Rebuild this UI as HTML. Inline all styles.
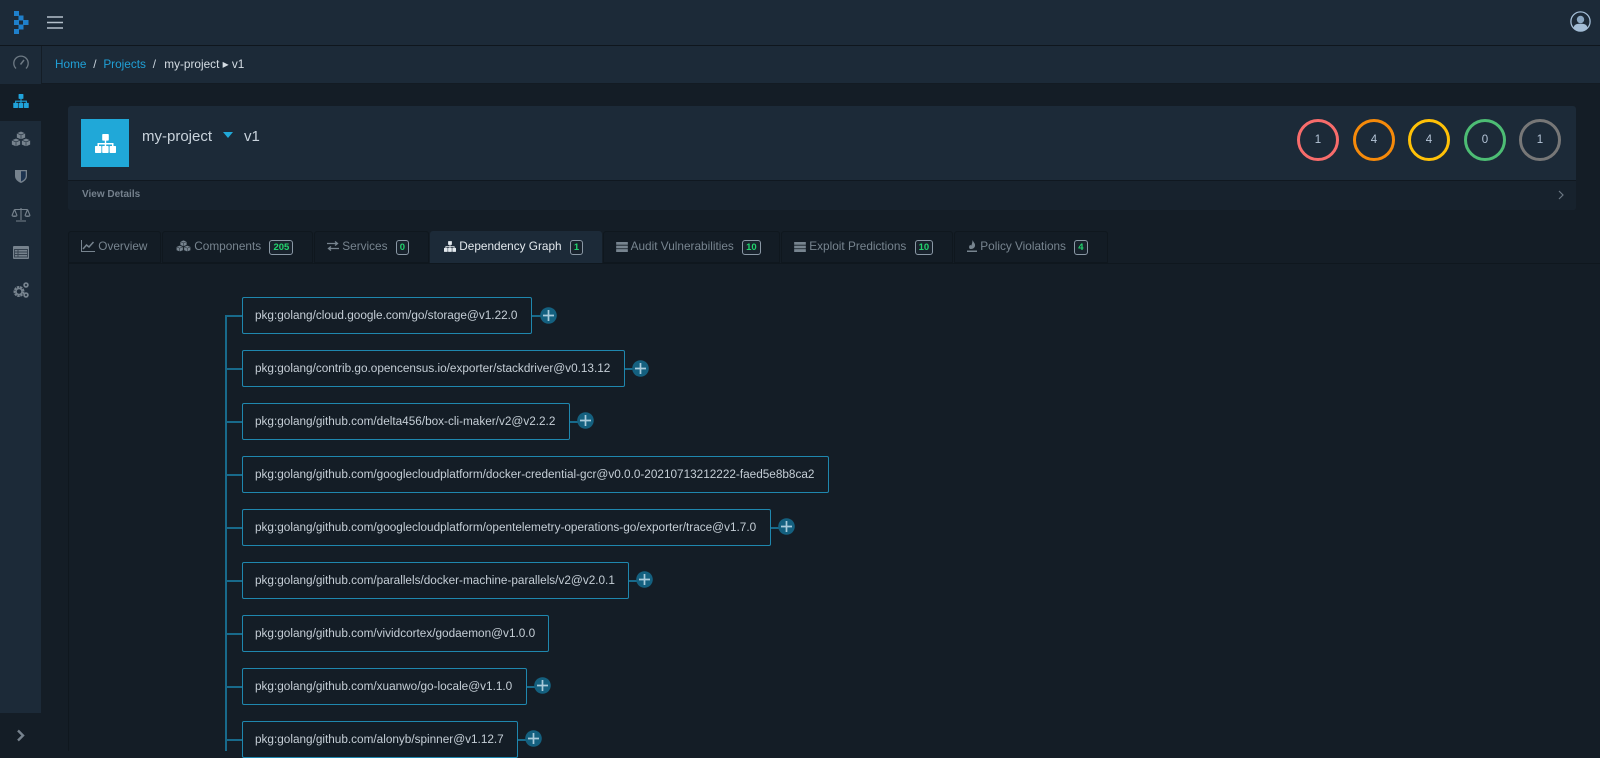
<!DOCTYPE html>
<html lang="en"><head><meta charset="utf-8"><title>my-project v1</title>
<style>
*{box-sizing:border-box}
html,body{margin:0;width:1600px;height:751px;overflow:hidden;background:#141d26;font-family:"Liberation Sans",sans-serif;font-size:11.8px;color:#c9d3dc}
.a{position:absolute}
#top{left:0;top:0;width:1600px;height:46px;background:#1c2a38;border-bottom:1px solid #0f161d}
#side{left:0;top:46px;width:41px;height:667px;background:#1c2a38}
#act{left:0;top:84px;width:41px;height:37px;background:#141d26}
#crumb{left:41px;top:46px;width:1559px;height:38px;background:#1c2a38;border-left:1px solid #141d26;border-bottom:1px solid #131b23;line-height:36px;padding-left:13px;font-size:11.8px;color:#d5dde4}
#crumb a{color:#20a0d6}
#crumb i{font-style:normal;margin:0 3.5px;color:#c9d3dc}
#card{left:68px;top:106px;width:1508px;height:104px;background:#1c2a38;border-radius:3px;overflow:hidden}
#foot{left:0;top:74px;width:1508px;height:30px;background:#17222d;border-top:1px solid #101820;color:#75818d;font-size:10px;font-weight:bold;line-height:27px;padding-left:14px}
#pic{left:13px;top:13px;width:48px;height:48px;background:#20a8d8}
.t{left:74px;top:22px;font-size:15px;color:#c9d3dc;line-height:18px}
.c{top:119px;width:42px;height:42px;border-radius:50%;border:3px solid;text-align:center;line-height:36px;font-size:11.5px;color:#b5c5d8}
.tab{--b:#141d26;top:231px;height:32px;background:#131c25;border:1px solid #0f171e;border-radius:3px 3px 0 0;color:#77848f;line-height:29px;font-size:11.8px;white-space:nowrap;padding-left:12px}
.tab svg{vertical-align:-2px}
.tab b{display:inline-block;height:15px;line-height:13px;border:1px solid #8a98a5;border-radius:3px;background:#18222c;color:#22d36e;font-size:9.5px;padding:0 3px;margin-left:5px;vertical-align:0}
#panel{left:68px;top:263px;width:1532px;height:488px;background:#141d26;border-left:1px solid #0f171e;border-top:1px solid #0f171e}
.n{left:242px;height:37px;border:1px solid #1f87ae;border-radius:2px;background:#141d26;line-height:35px;padding-left:12px;font-size:11.78px;color:#c5ced6;white-space:nowrap}
.h{left:225px;width:17px;height:2px;background:#186a8b}
.k{width:10px;height:2px;background:#186a8b}
.p{width:17px;height:17px}
</style></head><body>
<svg width="0" height="0" style="position:absolute"><defs>
<symbol id="map" viewBox="0 0 21 19"><path fill="currentColor" d="M8 0h5a.8.8 0 0 1 .8.8v5a.8.8 0 0 1-.8.8h-1.800V9h7.300v3H20.300a.7.7 0 0 1 .7.700v5.600a.7.7 0 0 1-.7.700h-5a.7.700 0 0 1-.7-.700v-5.600a.7.7 0 0 1 .7-.700h1.700v-1.500h-5.800V12h1.700a.7.7 0 0 1 .7.700v5.600a.7.7 0 0 1-.7.700h-5a.7.7 0 0 1-.7-.700v-5.600a.7.7 0 0 1 .7-.700h1.800v-1.500H4V12h1.700a.7.700 0 0 1 .7.700v5.600a.7.7 0 0 1-.7.700h-5a.7.700 0 0 1-.7-.700v-5.600A.7.700 0 0 1 .7 12h1.800V9h7.300V6.600H8a.8.8 0 0 1-.8-.8v-5A.8.8 0 0 1 8 0z"/></symbol>
<symbol id="cube" viewBox="0 0 10 9"><path fill="currentColor" stroke="var(--b,#1c2a38)" stroke-width=".7" d="M5 .2l4.500 1.800v4.800L5 8.700.5 6.800V2z"/><path fill="none" stroke="var(--b,#1c2a38)" stroke-width=".6" d="M.8 2.200L5 3.900l4.200-1.700M5 3.900v4.600"/></symbol>
<symbol id="cubes" viewBox="0 0 20 16"><use href="#cube" x="5" y="0" width="10" height="9"/><use href="#cube" x="0" y="7" width="10" height="9"/><use href="#cube" x="10" y="7" width="10" height="9"/></symbol>
<symbol id="srv" viewBox="0 0 14 12"><path fill="currentColor" d="M0 0h14v3.300H0zM0 4.300h14v3.300H0zM0 8.600h14V12H0z"/></symbol>
<symbol id="plus" viewBox="0 0 17 17"><circle cx="8.500" cy="8.500" r="8.300" fill="#14607f"/><path d="M8.500 3v11M3 8.500h11" stroke="#a9cbdb" stroke-width="1.700"/></symbol>
</defs></svg>

<div class="a" id="top"></div>
<svg class="a" style="left:14px;top:11px" width="15" height="23" viewBox="0 0 15 23"><path fill="#1f80cb" d="M0 0h5v5H0zM4.500 4.500h5v5h-5zM9 9h5.500v5H9zM0 9h5v5H0zM4.500 13.500h5v5h-5zM0 18h5v5H0z"/></svg>
<svg class="a" style="left:47px;top:15px" width="17" height="15" viewBox="0 0 17 15"><path d="M0 2h16M0 7.500h16M0 13h16" stroke="#b4c0cb" stroke-width="1.400"/></svg>
<svg class="a" style="left:1570px;top:11px" width="21" height="21" viewBox="0 0 21 21"><circle cx="10.500" cy="10.500" r="9.600" fill="#1c2a38" stroke="#a3bdd6" stroke-width="1.300"/><circle cx="10.500" cy="8.500" r="3.700" fill="#8aa7c2"/><path d="M3.500 17c.5-3.500 3-4.200 7-4.200s6.500.7 7 4.200a9.500 9.500 0 0 1-14 0z" fill="#a3bdd6"/></svg>

<div class="a" id="side"></div>
<div class="a" id="act"></div>
<svg class="a" style="left:13px;top:55px;color:#6d7983" width="16" height="15" viewBox="0 0 16 15"><path d="M3 13.500A7.200 7.200 0 1 1 13 13.500" fill="none" stroke="currentColor" stroke-width="1.300"/><path d="M7.500 9.500L11 5" stroke="currentColor" stroke-width="1.500"/></svg>
<svg class="a" style="left:13px;top:94px;color:#20a3da" width="16" height="14"><use href="#map"/></svg>
<svg class="a" style="left:11px;top:131px;color:#76828d" width="20" height="16"><use href="#cubes"/></svg>
<svg class="a" style="left:15px;top:169px" width="12" height="14" viewBox="0 0 12 14"><path fill="#76828d" d="M0 1h12v6c0 3.500-3 5.800-6 7-3-1.200-6-3.500-6-7z"/><path fill="#1c3350" d="M6 2.200h4.700V7c0 2.600-2.300 4.400-4.700 5.500z"/></svg>
<svg class="a" style="left:11px;top:207px" width="20" height="15" viewBox="0 0 20 15"><path d="M10 1v12M5 14h10M3.500 2.500h13M3.500 2.500L1 8.500M3.500 2.500L6 8.500M16.500 2.500L14 8.500M16.500 2.500L19 8.500" stroke="#76828d" stroke-width="1.100" fill="none"/><path fill="#76828d" d="M.5 8.500h6c-.3 2-5.700 2-6 0zM13.500 8.500h6c-.3 2-5.700 2-6 0z"/></svg>
<svg class="a" style="left:13px;top:246px" width="16" height="13" viewBox="0 0 16 13"><rect width="16" height="13" rx="1" fill="#76828d"/><path d="M1.500 3.500h13v7.500h-13zM1.500 6h13M1.500 8.500h13M5 3.500V11" stroke="#34414e" stroke-width=".9" fill="none"/></svg>
<svg class="a" style="left:13px;top:282px" width="16" height="16" viewBox="0 0 16 16"><circle cx="6" cy="9.500" r="4" fill="none" stroke="#76828d" stroke-width="3" stroke-dasharray="2.200 .6"/><circle cx="6" cy="9.500" r="3" fill="none" stroke="#76828d" stroke-width="1.500"/><circle cx="13" cy="3" r="1.900" fill="none" stroke="#76828d" stroke-width="1.700"/><circle cx="13" cy="13" r="1.900" fill="none" stroke="#76828d" stroke-width="1.700"/></svg>
<svg class="a" style="left:16px;top:729px" width="10" height="13" viewBox="0 0 10 13"><path d="M2 1.500l5 5-5 5" fill="none" stroke="#76828d" stroke-width="2.400"/></svg>

<div class="a" id="crumb"><a>Home</a><i>&nbsp;/&nbsp;</i><a>Projects</a><i style="margin-right:5px">&nbsp;/&nbsp;</i>my-project ▸ v1</div>

<div class="a" id="card">
<div class="a" id="pic"><svg class="a" style="left:14px;top:15px;color:#fff" width="21" height="19"><use href="#map"/></svg></div>
<div class="a t">my-project</div>
<div class="a" style="left:155px;top:26px;width:0;height:0;border:5px solid transparent;border-top:6px solid #20a8d8;border-bottom:0"></div>
<div class="a t" style="left:176px">v1</div>
<div class="a" id="foot">View Details<svg class="a" style="left:1490px;top:9px" width="7" height="10" viewBox="0 0 7 10"><path d="M1 1l4 4-4 4" fill="none" stroke="#6b7783" stroke-width="1.200"/></svg></div>
</div>
<div class="a c" style="left:1297px;border-color:#f86c6b">1</div>
<div class="a c" style="left:1353px;border-color:#f68a0a">4</div>
<div class="a c" style="left:1408px;border-color:#ffc107">4</div>
<div class="a c" style="left:1464px;border-color:#4dbd74">0</div>
<div class="a c" style="left:1519px;border-color:#777">1</div>

<div class="a tab" style="left:68px;width:93px"><svg width="14" height="12" viewBox="0 0 14 12"><path d="M.5 0v11.500H14" stroke="currentColor" fill="none"/><path d="M2 9l3.500-4 2.500 2L12.500 2" stroke="currentColor" stroke-width="1.500" fill="none"/></svg> Overview</div>
<div class="a tab" style="left:162px;width:151px;padding-left:13px"><svg width="15" height="12" style="color:#77848f"><use href="#cubes"/></svg> Components <b>205</b></div>
<div class="a tab" style="left:314px;width:115px;padding-left:12px"><svg width="12" height="10" viewBox="0 0 12 10" style="vertical-align:-1px"><path d="M0 2.500h10M8 .5l2.500 2-2.500 2M12 7.500H2M4 5.500l-2.500 2 2.500 2" stroke="currentColor" stroke-width="1.300" fill="none"/></svg> Services <b>0</b></div>
<div class="a tab" style="left:430px;width:172px;background:#1c2a38;border-color:#1c2a38;color:#e3e9ee;padding-left:13px"><svg width="12" height="11" style="color:#e3e9ee"><use href="#map"/></svg> Dependency Graph <b>1</b></div>
<div class="a tab" style="left:603px;width:177px"><svg width="12" height="10" style="color:#77848f"><use href="#srv"/></svg> Audit Vulnerabilities <b>10</b></div>
<div class="a tab" style="left:781px;width:172px"><svg width="12" height="10" style="color:#77848f"><use href="#srv"/></svg> Exploit Predictions <b>10</b></div>
<div class="a tab" style="left:954px;width:154px"><svg width="10" height="12" viewBox="0 0 10 12"><path fill="currentColor" d="M5.500 0c1 2.500 3 3.500 2.500 6S5 9 3.500 9 1.500 6.500 3 5c.8 0 1 .5 1.200.8C5 4 5.500 2 5.500 0zM0 10.500h10V12H0z"/></svg> Policy Violations <b>4</b></div>

<div class="a" id="panel"></div>
<div class="a" style="left:225px;top:315px;width:2px;height:436px;background:#186a8b"></div>

<div class="a h" style="top:315px"></div><div class="a n" style="top:297px;width:290px">pkg:golang/cloud.google.com/go/storage@v1.22.0</div><div class="a k" style="left:532px;top:315px"></div><svg class="a p" style="left:540px;top:307px"><use href="#plus"/></svg>
<div class="a h" style="top:368px"></div><div class="a n" style="top:350px;width:383px">pkg:golang/contrib.go.opencensus.io/exporter/stackdriver@v0.13.12</div><div class="a k" style="left:625px;top:368px"></div><svg class="a p" style="left:632px;top:360px"><use href="#plus"/></svg>
<div class="a h" style="top:421px"></div><div class="a n" style="top:403px;width:328px">pkg:golang/github.com/delta456/box-cli-maker/v2@v2.2.2</div><div class="a k" style="left:570px;top:421px"></div><svg class="a p" style="left:577px;top:412px"><use href="#plus"/></svg>
<div class="a h" style="top:474px"></div><div class="a n" style="top:456px;width:587px">pkg:golang/github.com/googlecloudplatform/docker-credential-gcr@v0.0.0-20210713212222-faed5e8b8ca2</div>
<div class="a h" style="top:527px"></div><div class="a n" style="top:509px;width:529px">pkg:golang/github.com/googlecloudplatform/opentelemetry-operations-go/exporter/trace@v1.7.0</div><div class="a k" style="left:771px;top:527px"></div><svg class="a p" style="left:778px;top:518px"><use href="#plus"/></svg>
<div class="a h" style="top:580px"></div><div class="a n" style="top:562px;width:387px">pkg:golang/github.com/parallels/docker-machine-parallels/v2@v2.0.1</div><div class="a k" style="left:629px;top:580px"></div><svg class="a p" style="left:636px;top:571px"><use href="#plus"/></svg>
<div class="a h" style="top:633px"></div><div class="a n" style="top:615px;width:307px">pkg:golang/github.com/vividcortex/godaemon@v1.0.0</div>
<div class="a h" style="top:686px"></div><div class="a n" style="top:668px;width:285px">pkg:golang/github.com/xuanwo/go-locale@v1.1.0</div><div class="a k" style="left:527px;top:686px"></div><svg class="a p" style="left:534px;top:677px"><use href="#plus"/></svg>
<div class="a h" style="top:739px"></div><div class="a n" style="top:721px;width:276px">pkg:golang/github.com/alonyb/spinner@v1.12.7</div><div class="a k" style="left:518px;top:739px"></div><svg class="a p" style="left:525px;top:730px"><use href="#plus"/></svg>
</body></html>
